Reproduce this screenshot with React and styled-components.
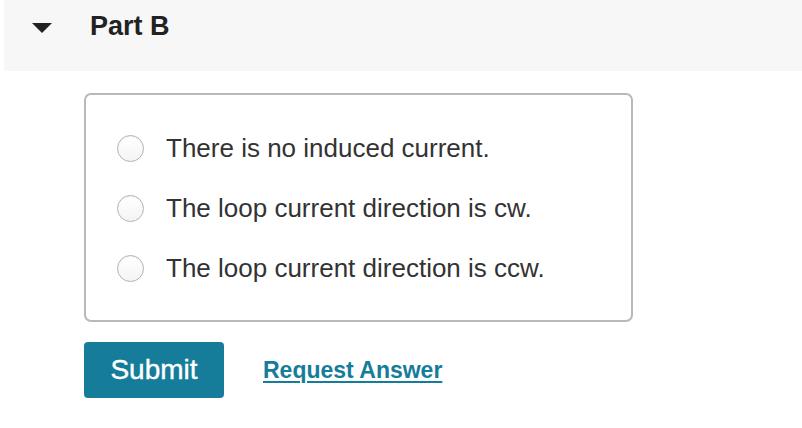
import React from 'react';
import styled, { createGlobalStyle } from 'styled-components';

const GlobalStyle = createGlobalStyle`
  body {
    margin: 0;
    background: #ffffff;
    font-family: "Liberation Sans", Arial, sans-serif;
    color: #333333;
  }
`;

const options = [
  'There is no induced current.',
  'The loop current direction is cw.',
  'The loop current direction is ccw.',
];

const App = () => {
  return (
    <Page>
      <GlobalStyle />
      <Header>
        <Caret viewBox="0 0 20 10">
          <polygon points="0,0 20,0 10,10" fill="#222" />
        </Caret>
        <Title>Part B</Title>
      </Header>
      <Body>
        <Choices>
          {options.map((text) => (
            <Choice key={text}>
              <Radio type="radio" name="partB" />
              <ChoiceText>{text}</ChoiceText>
            </Choice>
          ))}
        </Choices>
        <Actions>
          <SubmitButton>Submit</SubmitButton>
          <RequestLink href="#">Request Answer</RequestLink>
        </Actions>
      </Body>
    </Page>
  );
};

const Page = styled.div`
  width: 802px;
  height: 428px;
  overflow: hidden;
`;

const Header = styled.div`
  margin-left: 4px;
  height: 71px;
  background: #f7f7f7;
  display: flex;
  align-items: center;
  padding-bottom: 18px;
  box-sizing: border-box;
`;

const Caret = styled.svg`
  width: 20px;
  height: 10px;
  margin-left: 28px;
  margin-top: 2px;
`;

const Title = styled.h2`
  margin: 0 0 0 38px;
  font-size: 27px;
  font-weight: bold;
  color: #222222;
`;

const Body = styled.div`
  padding: 22px 0 0 84px;
`;

const Choices = styled.div`
  width: 549px;
  height: 229px;
  box-sizing: border-box;
  border: 2px solid #b9b9b9;
  border-radius: 7px;
  padding: 40px 0 0 31px;
  display: flex;
  flex-direction: column;
  gap: 34px;
`;

const Choice = styled.label`
  display: flex;
  align-items: center;
  height: 26px;
`;

const Radio = styled.input`
  appearance: none;
  margin: 0;
  width: 27px;
  height: 27px;
  border-radius: 50%;
  border: 1px solid #b3b3b3;
  background: linear-gradient(#ffffff, #f4f4f4);
  box-shadow: inset 0 1px 1px rgba(0, 0, 0, 0.05);
`;

const ChoiceText = styled.span`
  margin-left: 22px;
  font-size: 26px;
  color: #333333;
`;

const Actions = styled.div`
  margin-top: 20px;
  display: flex;
  align-items: center;
  gap: 39px;
`;

const SubmitButton = styled.button`
  width: 140px;
  height: 56px;
  border: none;
  border-radius: 4px;
  background: #157c9a;
  color: #ffffff;
  font-family: "Liberation Sans", Arial, sans-serif;
  font-size: 28px;
  padding: 0;
  -webkit-text-stroke: 0.4px #ffffff;
`;

const RequestLink = styled.a`
  font-size: 23px;
  font-weight: bold;
  color: #157c9a;
  text-decoration: underline;
  text-underline-offset: 3px;
  text-decoration-thickness: 2px;
`;

export default App;
